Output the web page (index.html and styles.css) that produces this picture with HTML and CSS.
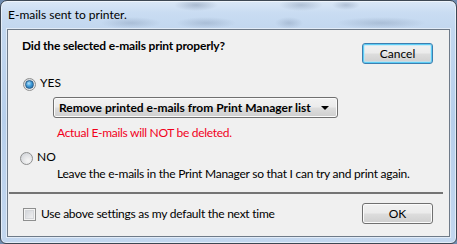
FILE: index.html
```html
<!DOCTYPE html>
<html lang="en">
<head>
  <meta charset="UTF-8" />
  <title>E-mails sent to printer.</title>
  <link rel="stylesheet" href="styles.css">
</head>
<body>

<div class="window">
  <div class="titlebar">E-mails sent to printer.</div>

  <div class="client">
    <div class="top-row">
      <div class="question">Did the selected e-mails print properly?</div>
      <button class="btn btn-default">Cancel</button>
    </div>

    <div class="option option-yes">
      <span class="radio checked"></span>
      <span>YES</span>
    </div>
    <div class="option-body">
      <div class="select">
        <span>Remove printed e-mails from Print Manager list</span>
        <span class="arrow"></span>
      </div>
      <div class="warning">Actual E-mails will NOT be deleted.</div>
    </div>

    <div class="option option-no">
      <span class="radio"></span>
      <span>NO</span>
    </div>
    <div class="option-body">
      <div class="hint">Leave the e-mails in the Print Manager so that I can try and print again.</div>
    </div>

    <div class="separator"></div>

    <div class="bottom-row">
      <label class="check">
        <span class="checkbox"></span>
        <span>Use above settings as my default the next time</span>
      </label>
      <button class="btn">OK</button>
    </div>
  </div>
</div>

</body>
</html>
```

FILE: styles.css
```css
* { box-sizing: border-box; margin: 0; padding: 0; }

body {
  width: 457px;
  height: 244px;
  overflow: hidden;
  font-family: Lato, "Liberation Sans", sans-serif;
  font-size: 12px;
  line-height: 16px;
  letter-spacing: -0.25px;
  color: #000;
  background: #6f8cb0;
}

/* glass frame */
.window {
  width: 457px;
  height: 244px;
  padding: 28px 6px 6px 6px;
  border: 1px solid #3d4753;
  border-radius: 7px 7px 6px 6px;
  background:
    radial-gradient(ellipse 22px 6px at 195px 4px, rgba(90,110,140,0.35), transparent),
    radial-gradient(ellipse 22px 6px at 300px 4px, rgba(90,110,140,0.3), transparent),
    radial-gradient(ellipse 14px 5px at 345px 4px, rgba(90,110,140,0.3), transparent),
    radial-gradient(ellipse 30px 6px at 130px 22px, rgba(90,110,140,0.25), transparent),
    radial-gradient(ellipse 30px 6px at 205px 22px, rgba(90,110,140,0.25), transparent),
    radial-gradient(ellipse 14px 6px at 288px 22px, rgba(90,110,140,0.25), transparent),
    radial-gradient(ellipse 45px 6px at 380px 22px, rgba(90,110,140,0.25), transparent),
    linear-gradient(180deg, #dae7f6 0, #c9dcf2 12px, #c2d7ef 28px, #b7cfeb 120px, #c3d7ef 100%);
  box-shadow: inset 0 0 0 1px rgba(255,255,255,0.55);
}

.titlebar {
  height: 28px;
  margin: -28px -6px 0;
  padding: 6px 0 0 7px;
  letter-spacing: 0;
}

.client {
  height: 208px;
  border: 1px solid #6e7a88;
  background: #f0f0f0;
  box-shadow: 0 0 0 1px rgba(255,255,255,0.5);
}

.top-row {
  display: flex;
  justify-content: space-between;
  align-items: flex-start;
  padding: 8px 16px 0 14px;
}

.question {
  font-weight: bold;
  letter-spacing: -0.18px;
}

.btn {
  width: 71px;
  height: 21px;
  margin-top: 5px;
  font: inherit;
  letter-spacing: 0;
  color: #000;
  border: 1px solid #707070;
  border-radius: 3px;
  background: linear-gradient(180deg, #f2f2f2 0%, #ebebeb 48%, #dddddd 52%, #cfcfcf 100%);
  box-shadow: inset 0 0 0 1px #fbfbfb;
}

.btn-default {
  border-color: #3c7fb1;
  box-shadow: inset 0 0 0 1px #5dcdf5, inset 0 0 0 2px rgba(180,230,250,0.6);
}

.option {
  display: flex;
  align-items: center;
  gap: 4px;
  letter-spacing: 0;
}

.option-yes {
  margin-top: 11px;
  padding-left: 15px;
}

.option-no {
  margin-top: 8px;
  padding-left: 12px;
}

.radio {
  width: 13px;
  height: 13px;
  margin-top: 2px;
  border-radius: 50%;
  border: 1px solid #8e8f8f;
  background: radial-gradient(circle at 65% 70%, #f6f6f6 0, #e4e5e7 45%, #c9cdd3 100%);
  display: flex;
  align-items: center;
  justify-content: center;
}

.radio.checked::after {
  content: "";
  width: 7px;
  height: 7px;
  border-radius: 50%;
  border: 1px solid #2b5f8a;
  background: radial-gradient(circle at 40% 35%, #b6e2fb 0, #3d9ad8 45%, #1c5e9c 100%);
}

.option-body {
  padding-left: 49px;
}

.select {
  width: 285px;
  height: 21px;
  margin: 6px 0 0 -4px;
  padding: 0 8px 0 5px;
  display: flex;
  align-items: center;
  justify-content: space-between;
  font-weight: bold;
  letter-spacing: 0;
  border: 1px solid #707070;
  border-radius: 3px;
  background: linear-gradient(180deg, #f2f2f2 0%, #ebebeb 48%, #dddddd 52%, #cfcfcf 100%);
  box-shadow: inset 0 0 0 1px #fbfbfb;
}

.arrow {
  width: 0;
  height: 0;
  margin-top: 1px;
  border-left: 4px solid transparent;
  border-right: 4px solid transparent;
  border-top: 4px solid #000;
}

.warning {
  margin-top: 7px;
  color: #f2001c;
  letter-spacing: -0.3px;
}

.hint {
  margin-top: 1px;
}

.separator {
  height: 2px;
  margin: 10px 6px 0 1px;
  background: #747474;
}

.bottom-row {
  display: flex;
  justify-content: space-between;
  align-items: center;
  padding: 0 16px 0 15px;
  margin-top: 9px;
}

.check {
  display: flex;
  align-items: center;
  gap: 5px;
}

.checkbox {
  width: 13px;
  height: 13px;
  margin-top: 2px;
  border: 1px solid #8e8f8f;
  background: linear-gradient(135deg, #cbcfd5 0%, #e6e7e9 60%, #f6f6f6 100%);
  box-shadow: inset 0 0 0 1px #f4f4f4, inset 0 0 0 2px #d5d7da;
}

.bottom-row .btn {
  margin-top: 0;
}
```
